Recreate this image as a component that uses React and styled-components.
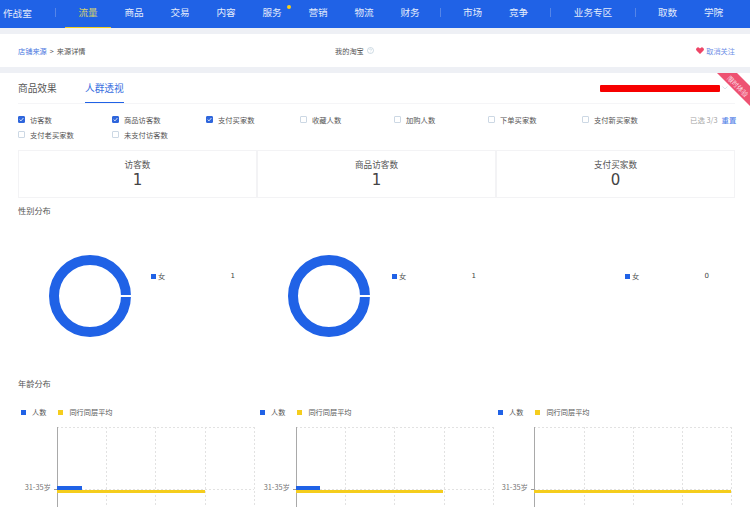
import React from "react";
import styled, { createGlobalStyle } from "styled-components";

const Global = createGlobalStyle`
  html, body { margin: 0; padding: 0; background: #eef0f5; overflow: hidden; }
  body { font-family: "Noto Sans CJK SC", "Noto Sans", sans-serif; color: #555; }
  #root { width: 750px; height: 507px; overflow: hidden; }
`;

const Page = styled.div`width: 750px; height: 507px; overflow: hidden; display: flex; flex-direction: column;`;
const Nav = styled.nav`height: 28px; flex: none; background: #2062e6; display: flex; align-items: center; padding-left: 3px;`;
const Brand = styled.span`width: 29px; font-size: 9.6px; color: #e4ecfb; white-space: nowrap; padding-bottom: 3px;`;
const NavSep = styled.i`width: 1px; height: 9px; background: #5585e8; margin: 0 ${p => p.$r}px 3px ${p => p.$l}px; flex: none;`;
const NavItem = styled.a`
  position: relative; width: ${p => p.$w || 46}px; height: 28px; flex: none; box-sizing: border-box;
  display: flex; align-items: center; justify-content: center;
  font-size: 9.6px; white-space: nowrap; padding-bottom: 3px;
  color: ${p => p.$active ? "#d9d36c" : "#e4ecfb"};
  border-bottom: 1px solid ${p => p.$active ? "#f2cd1f" : "transparent"};
`;
const NavDot = styled.b`position: absolute; right: 4px; top: 5px; width: 4px; height: 4px; border-radius: 50%; background: #f7cf16;`;

const Crumbs = styled.div`
  margin-top: 6px; height: 33px; flex: none; background: #fff; position: relative;
  display: grid; grid-template-columns: 317px auto 1fr; align-items: center; padding: 0 15px 0 18px; font-size: 7.2px;
`;
const CrumbLeft = styled.div`color: #555; white-space: nowrap; display: flex; gap: 3px;`;
const CrumbLink = styled.span`color: #4a76e0;`;
const CrumbMid = styled.div`display: flex; align-items: center; gap: 3px; color: #555;`;
const CrumbRight = styled.div`display: flex; align-items: center; justify-content: flex-end; gap: 2px; color: #6f8fe6;`;

const Main = styled.main`
  margin-top: 6px; flex: 1; background: #fff; position: relative; padding: 0 15px 0 18px; overflow: hidden;
`;
const TabBar = styled.div`height: 30px; display: flex; align-items: flex-start; gap: 28px; border-bottom: 1px solid #f5f5f7; position: relative;`;
const Tab = styled.div`
  height: 30px; box-sizing: border-box; font-size: 9.7px; line-height: 30px; white-space: nowrap; width: 39px;
  color: ${p => p.$active ? "#3a6fe0" : "#555"};
  border-bottom: 1px solid ${p => p.$active ? "#2062e6" : "transparent"};
`;
const Redact = styled.div`position: absolute; left: 582px; top: 12px; width: 120px; height: 7px; background: #f70000; border-radius: 1px;`;
const Chevron = styled.svg`position: absolute; left: 704px; top: 13px;`;
const Ribbon = styled.div`
  position: absolute; right: 0; top: 0; width: 33px; height: 33px; background: #ee5272;
  clip-path: polygon(0 0, 20px 0, 33px 13px, 33px 33px);
`;
const RibbonText = styled.span`
  position: absolute; left: 7px; top: 9px; width: 28px; text-align: center; font-size: 6.6px; line-height: 8px;
  color: #fbdbe2; transform: rotate(45deg); white-space: nowrap;
`;

const Filters = styled.div`display: grid; grid-template-columns: repeat(7, 94px) 1fr; grid-auto-rows: 15px; margin-top: 8px; align-items: center;`;
const Check = styled.label`display: flex; align-items: center; gap: 5px; font-size: 7.3px; color: #555; white-space: nowrap;`;
const Box = styled.span`
  width: 7px; height: 7px; flex: none; box-sizing: border-box; border-radius: 1px; display: flex;
  background: ${p => p.$on ? "#2f66dc" : "#fff"};
  border: 1px solid ${p => p.$on ? "#2f66dc" : "#ccd8e4"};
`;
const Selected = styled.div`font-size: 7.4px; color: #a5a5a5; white-space: nowrap; margin-left: 14px; margin-top: -1px; display: flex; gap: 4px;`;
const Reset = styled.span`color: #4c7ae6;`;

const Metrics = styled.div`display: grid; grid-template-columns: 239px 239px 239px; margin-top: 8px; height: 48px;`;
const Metric = styled.div`
  box-sizing: border-box; border: 1px solid #f3f3f5; display: flex; flex-direction: column; align-items: center;
  padding-top: 7px; color: #555;
`;
const MetricLabel = styled.div`font-size: 8.6px; line-height: 12px; white-space: nowrap;`;
const MetricValue = styled.div`font-family: "DejaVu Sans", sans-serif; font-size: 15px; line-height: 17px; color: #444; margin-top: 2px;`;

const SectionTitle = styled.h3`margin: ${p => p.$top}px 0 0; font-size: 8.2px; line-height: 12px; font-weight: 400; color: #555;`;
const Columns = styled.div`display: grid; grid-template-columns: repeat(3, 239px);`;
const DonutRow = styled(Columns)`height: 82px; margin-top: 39px;`;
const AgeRow = styled(Columns)`margin-top: 18px;`;
const DonutCol = styled.div`display: flex; align-items: flex-start; padding-left: 31px;`;
const DonutBlank = styled.div`width: 82px; height: 82px; flex: none;`;
const Legend = styled.div`
  margin-left: ${p => p.$offset}px; margin-top: 15px; width: 84px; display: flex; align-items: center; font-size: 7.3px; line-height: 11px; color: #555; flex: none;
`;
const Sq = styled.i`width: 5px; height: 5px; background: ${p => p.$c}; flex: none; margin-right: ${p => p.$gap || 2}px;`;
const LegendVal = styled.span`margin-left: auto; margin-top: 1px; font-family: "DejaVu Sans", sans-serif; font-size: 7px; color: #444;`;

const ChartCol = styled.div`display: flex; flex-direction: column;`;
const ChartLegend = styled.div`display: flex; align-items: center; height: 11px; padding-left: 3px; font-size: 7.2px; color: #555; white-space: nowrap; margin-left: ${p => p.$shift || 0}px;`;
const LegendLabel = styled.span`margin-right: 12px; line-height: 11px;`;
const ChartSvg = styled.svg`display: block; margin-top: 9px; overflow: visible;`;

const Donut = () => (
  <svg width="82" height="82" viewBox="0 0 82 82" style={{ flex: "none" }}>
    <circle cx="41" cy="41" r="36" fill="none" stroke="#2062e6" strokeWidth="10" />
    <rect x="68" y="40" width="14" height="2" fill="#fff" />
  </svg>
);

const Chart = ({ axis, end, blue, yellow, grid }) => (
  <ChartSvg width="239" height="81">
    <g stroke="#e2e2e2" strokeWidth="1" strokeDasharray="2 2" fill="none">
      <line x1={axis} x2={end} y1="0.5" y2="0.5" />
      <line x1={axis} x2={end} y1="62.5" y2="62.5" />
      {grid.map(x => <line key={x} x1={x + 0.5} x2={x + 0.5} y1="0" y2="81" />)}
    </g>
    <line x1={axis - 3} x2={axis} y1="62.5" y2="62.5" stroke="#999" />
    <line x1={axis + 0.5} x2={axis + 0.5} y1="0" y2="81" stroke="#a9a9a9" />
    {blue ? <rect x={axis} y="59" width={blue} height="4" fill="#2062e6" /> : null}
    <rect x={axis} y="63" width={yellow} height="3" fill="#f5cd1d" />
    <text x={axis - 6} y="62.5" textAnchor="end" fontSize="7.4" fill="#777" fontFamily="'Noto Sans CJK SC', sans-serif">31-35岁</text>
  </ChartSvg>
);

const leftFilters = [["访客数", 1], ["商品访客数", 1], ["支付买家数", 1], ["收藏人数"], ["加购人数"], ["下单买家数"], ["支付新买家数"]];

const Item = ({ t, on }) => (
  <Check>
    <Box $on={on}>
      {on ? <svg width="5" height="5" viewBox="0 0 5 5"><path d="M.6 2.500 2 3.900 4.400 1" fill="none" stroke="#fff" strokeWidth=".8" /></svg> : null}
    </Box>
    {t}
  </Check>
);

const AgeLegend = ({ shift }) => (
  <ChartLegend $shift={shift}>
    <Sq $c="#2062e6" $gap={6} /><LegendLabel>人数</LegendLabel>
    <Sq $c="#f5cd1d" $gap={6} /><LegendLabel>同行同层平均</LegendLabel>
  </ChartLegend>
);

export default function App() {
  return (
    <Page>
      <Global />
      <Nav>
        <Brand>作战室</Brand>
        <NavSep $l={23} $r={9} />
        <NavItem $active>流量</NavItem>
        <NavItem>商品</NavItem>
        <NavItem>交易</NavItem>
        <NavItem>内容</NavItem>
        <NavItem>服务<NavDot /></NavItem>
        <NavItem>营销</NavItem>
        <NavItem>物流</NavItem>
        <NavItem>财务</NavItem>
        <NavSep $l={7} $r={8.5} />
        <NavItem>市场</NavItem>
        <NavItem>竞争</NavItem>
        <NavSep $l={8.5} $r={13.5} />
        <NavItem $w={57}>业务专区</NavItem>
        <NavSep $l={13.5} $r={8.5} />
        <NavItem>取数</NavItem>
        <NavItem>学院</NavItem>
      </Nav>
      <Crumbs>
        <CrumbLeft><CrumbLink>店铺来源</CrumbLink><span>&gt;</span><span>来源详情</span></CrumbLeft>
        <CrumbMid>
          我的淘宝
          <svg width="7" height="7" viewBox="0 0 7 7">
            <circle cx="3.500" cy="3.500" r="3" fill="none" stroke="#b9cbd8" strokeWidth=".7" />
            <path d="M2.600 2.800a.9.9 0 1 1 1.300.8c-.3.2-.4.4-.4.7M3.500 5.100v.4" fill="none" stroke="#b9cbd8" strokeWidth=".6" />
          </svg>
        </CrumbMid>
        <CrumbRight>
          <svg width="8" height="7" viewBox="0 0 8 7"><path d="M4 7 .7 3.700A1.900 1.900 0 0 1 .7 1a1.900 1.900 0 0 1 2.700 0l.6.6.6-.6a1.900 1.900 0 0 1 2.700 0 1.900 1.900 0 0 1 0 2.700z" fill="#ee4566" /></svg>
          取消关注
        </CrumbRight>
      </Crumbs>
      <Main>
        <TabBar>
          <Tab>商品效果</Tab>
          <Tab $active>人群透视</Tab>
          <Redact />
          <Chevron width="6" height="4" viewBox="0 0 6 4"><path d="M.5.5 3 3 5.500.5" fill="none" stroke="#d5dde6" strokeWidth=".8" /></Chevron>
        </TabBar>
        <Ribbon><RibbonText>限时体验</RibbonText></Ribbon>
        <Filters>
          {leftFilters.map(([t, on]) => <Item key={t} t={t} on={!!on} />)}
          <Selected>已选 3/3 <Reset>重置</Reset></Selected>
          <Item t="支付老买家数" />
          <Item t="未支付访客数" />
        </Filters>
        <Metrics>
          <Metric><MetricLabel>访客数</MetricLabel><MetricValue>1</MetricValue></Metric>
          <Metric><MetricLabel>商品访客数</MetricLabel><MetricValue>1</MetricValue></Metric>
          <Metric><MetricLabel>支付买家数</MetricLabel><MetricValue>0</MetricValue></Metric>
        </Metrics>
        <SectionTitle $top={6}>性别分布</SectionTitle>
        <DonutRow>
          <DonutCol><Donut /><Legend $offset={20}><Sq $c="#2062e6" />女<LegendVal>1</LegendVal></Legend></DonutCol>
          <DonutCol><Donut /><Legend $offset={22}><Sq $c="#2062e6" />女<LegendVal>1</LegendVal></Legend></DonutCol>
          <DonutCol><DonutBlank /><Legend $offset={16}><Sq $c="#2062e6" />女<LegendVal>0</LegendVal></Legend></DonutCol>
        </DonutRow>
        <SectionTitle $top={40}>年龄分布</SectionTitle>
        <AgeRow>
          <ChartCol>
            <AgeLegend />
            <Chart axis={39} end={236} blue={25} yellow={148} grid={[88, 137, 187, 236]} />
          </ChartCol>
          <ChartCol>
            <AgeLegend />
            <Chart axis={39} end={236} blue={24} yellow={147} grid={[88, 137, 187, 236]} />
          </ChartCol>
          <ChartCol>
            <AgeLegend shift={-1} />
            <Chart axis={38} end={235} yellow={197} grid={[88, 137, 186, 235]} />
          </ChartCol>
        </AgeRow>
      </Main>
    </Page>
  );
}
